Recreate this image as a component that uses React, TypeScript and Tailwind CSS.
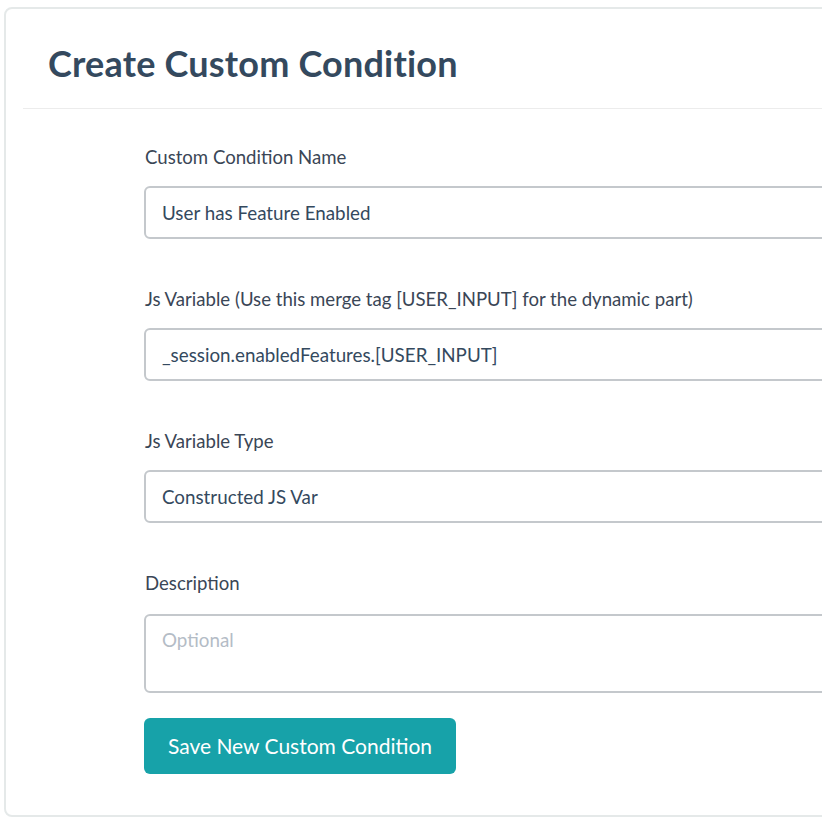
import { useState } from "react";

const fields = [
  { label: "Custom Condition Name", value: "User has Feature Enabled" },
  { label: "Js Variable (Use this merge tag [USER_INPUT] for the dynamic part)", value: "_session.enabledFeatures.[USER_INPUT]" },
  { label: "Js Variable Type", value: "Constructed JS Var" },
];

export default function App() {
  const [values, setValues] = useState(fields.map((f) => f.value));
  const [desc, setDesc] = useState("");

  return (
    <div className="w-full h-[825px] overflow-hidden bg-white pt-[7px] pl-[4px] font-['Lato','Liberation_Sans',sans-serif] text-[#34495e]">
      <div className="w-[1000px] h-[810px] border-2 border-[#e5e9e9] rounded-[8px] bg-white">
        {/* Header */}
        <div className="mx-[17px] h-[100px] flex items-center border-b border-[#ececec] pl-[25px] pt-[9px]">
          <h1 className="text-[36px] font-bold leading-none text-[#34495e] tracking-[0.2px]">Create Custom Condition</h1>
        </div>

        {/* Form */}
        <div className="pl-[138px] pt-[35px]">
          {fields.map((f, i) => (
            <div key={i} className="mb-[47px]">
              <label className="block text-[18.6px] leading-[26px] pl-[1px] mb-[16px] text-[#3a4656]">{f.label}</label>
              <input
                value={values[i]}
                onChange={(e) => setValues(values.map((v, j) => (j === i ? e.target.value : v)))}
                className="block w-[900px] h-[53px] border-2 border-[#c4c8cc] rounded-[6px] px-[16px] text-[18.8px] text-[#34495e] outline-none bg-white font-['Lato','Liberation_Sans',sans-serif]"
              />
            </div>
          ))}
          <div className="mb-[25px]">
            <label className="block text-[18.6px] leading-[26px] pl-[1px] mb-[18px] text-[#3a4656]">Description</label>
            <textarea
              value={desc}
              onChange={(e) => setDesc(e.target.value)}
              placeholder="Optional"
              className="block w-[900px] h-[79px] border-2 border-[#c4c8cc] rounded-[6px] px-[16px] pt-[11px] text-[18.8px] leading-[26px] text-[#34495e] placeholder:text-[#b4bcc6] outline-none resize-none bg-white font-['Lato','Liberation_Sans',sans-serif]"
            />
          </div>
          <button className="w-[312px] h-[56px] rounded-[6px] bg-[#17a2a9] text-white text-[21px] font-['Lato','Liberation_Sans',sans-serif]">
            Save New Custom Condition
          </button>
        </div>
      </div>
    </div>
  );
}
